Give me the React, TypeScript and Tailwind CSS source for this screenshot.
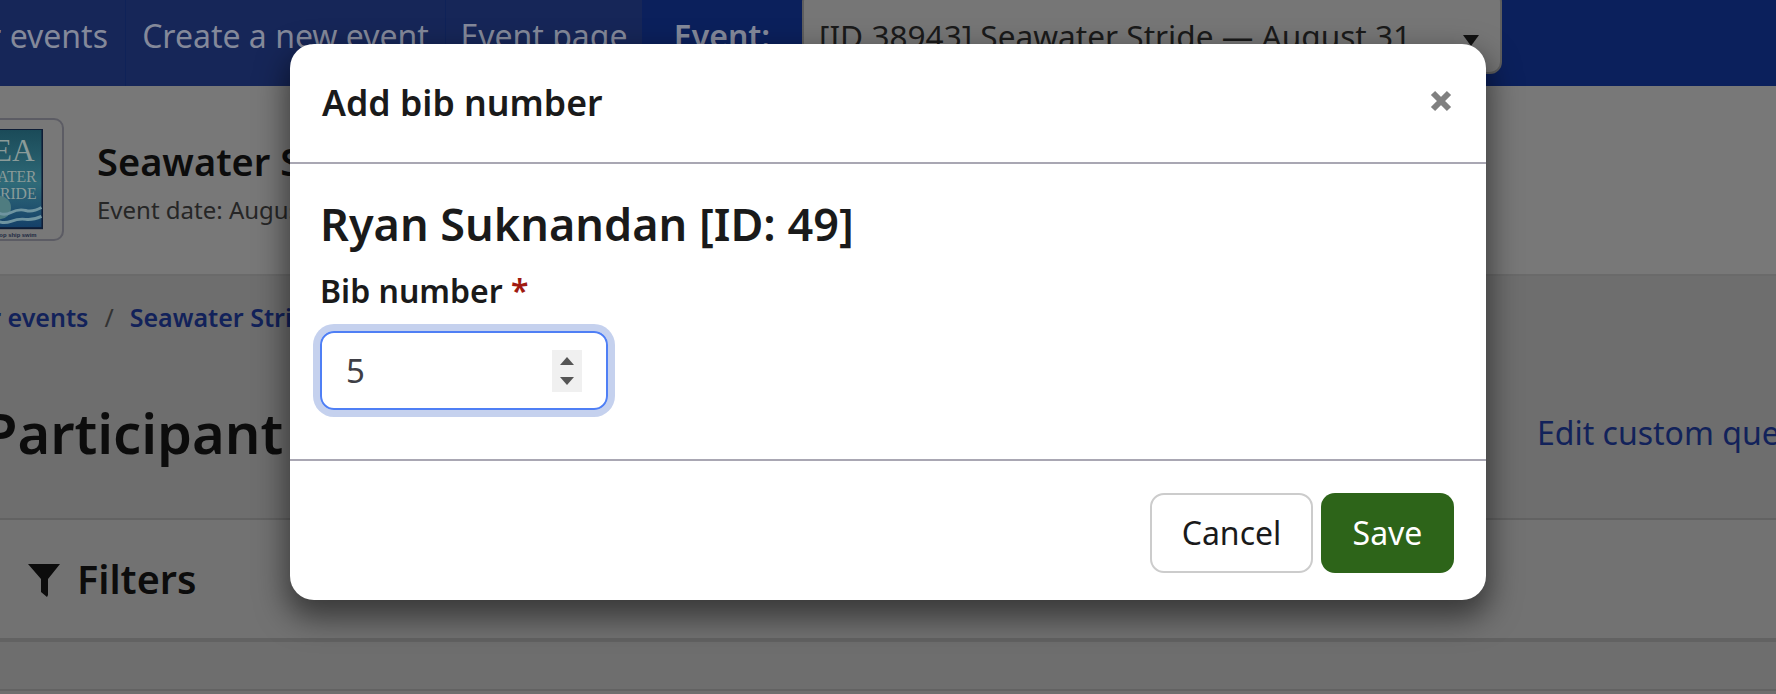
export default function App() {
  const font = { fontFamily: '"Noto Sans", "Open Sans", sans-serif' };
  return (
    <div style={font} className="relative h-[694px] w-[1776px] overflow-hidden bg-[#6e6e6e] text-[#0c0c0c]">
      {/* Top navigation */}
      <nav className="flex h-[86px] items-stretch bg-[#0b205c] text-[32px] text-[#84899a]">
        <div className="-ml-[20px] flex w-[146px] items-center justify-end border-r border-r-[#0f2258] bg-[#162658] pb-[14px] pr-[17px] whitespace-nowrap">
          our events
        </div>
        <div className="flex w-[320px] items-center justify-center border-r border-r-[#0f2258] bg-[#162658] pb-[14px] whitespace-nowrap">
          Create a new event
        </div>
        <div className="flex w-[196px] items-center justify-center bg-[#162658] pb-[14px] whitespace-nowrap">
          Event page
        </div>
        <div className="flex w-[160px] items-center justify-center pb-[14px] font-semibold">Event:</div>
        <div className="-mt-[10px] flex h-[84px] w-[700px] items-center justify-between rounded-[12px] border-2 border-[#5e5e5e] bg-[#767676] pl-[15px] pr-[21px] pt-[8px] text-[31.6px] text-[#1a1a1a] whitespace-nowrap">
          <span>[ID 38943] Seawater Stride — August 31</span>
          <span className="mt-[8px] h-0 w-0 border-x-[8px] border-t-[11px] border-x-transparent border-t-[#111]" />
        </div>
      </nav>

      {/* Event header */}
      <header className="flex h-[190px] items-start border-b-2 border-b-[#6a6a6a] bg-[#787878]">
        <div className="-ml-[20px] mt-[32px] flex h-[123px] w-[84px] shrink-0 flex-col items-end rounded-[10px] border-2 border-[#5c5c64] pr-[19px] pt-[9px]">
          <svg width="62" height="112" viewBox="0 0 62 112">
            <defs>
              <linearGradient id="sea" x1="0" y1="0" x2="0" y2="1">
                <stop offset="0" stopColor="#1a4a58" />
                <stop offset="0.55" stopColor="#2f6a78" />
                <stop offset="1" stopColor="#143f68" />
              </linearGradient>
            </defs>
            <rect x="0" y="0" width="62" height="101" fill="url(#sea)" stroke="#0f1d36" strokeWidth="2" />
            <text x="54" y="33" textAnchor="end" fontFamily="Liberation Serif" fontSize="32" fill="#8a9b99">EA</text>
            <text x="56" y="54" textAnchor="end" fontFamily="Liberation Serif" fontSize="16" fill="#8a9b99">ATER</text>
            <text x="56" y="71" textAnchor="end" fontFamily="Liberation Serif" fontSize="16" fill="#8a9b99">RIDE</text>
            <circle cx="18" cy="80" r="12" fill="#4f7c80" />
            <path d="M0 86q8-7 15-2t15 1 15-2 16-3" fill="none" stroke="#6f94a0" strokeWidth="3" />
            <path d="M0 95q8-6 15-2t15 1 15-2 16-3" fill="none" stroke="#6f94a0" strokeWidth="3" />
            <text x="56" y="110" textAnchor="end" fontFamily="Liberation Sans" fontSize="6" fontWeight="bold" fill="#1e2a42">hop ship swim</text>
          </svg>
        </div>
        <div className="ml-[33px] mt-[49px] whitespace-nowrap">
          <div className="text-[38px] leading-[52px] font-semibold">Seawater Stride</div>
          <div className="mt-[6px] text-[24px] leading-[34px] text-[#262626]">Event date: August 31</div>
        </div>
      </header>

      {/* Breadcrumb */}
      <div className="-ml-[55px] flex h-[84px] items-center gap-[16px] whitespace-nowrap text-[25px] font-semibold text-[#12225a]">
        <span>Your events</span>
        <span className="font-normal text-[#333333]">/</span>
        <span>Seawater Stride</span>
      </div>

      {/* Page title */}
      <div className="flex h-[160px] items-start justify-between border-b-2 border-b-[#626262] pt-[37px]">
        <h1 className="-ml-[17px] text-[56px] leading-[70px] font-semibold whitespace-nowrap">Participant list</h1>
        <a className="-mr-[60px] mt-[-50px] w-[299px] self-center whitespace-nowrap text-[32px] leading-[44px] text-[#12225a]">Edit custom questions</a>
      </div>

      {/* Filters */}
      <div className="flex h-[122px] items-center gap-[17px] border-b-4 border-b-[#626262] bg-[#727272] pl-[28px] pt-[2px]">
        <svg width="32" height="33" viewBox="0 0 32 33" fill="#0c0c0c">
          <path d="M0 0h32L20 15v16l-1 2-6-5V15Z" />
        </svg>
        <span className="text-[39.5px] font-semibold">Filters</span>
      </div>
      <div className="h-[49px] border-b-2 border-b-[#626262]" />

      {/* Modal */}
      <div className="absolute left-[290px] top-[44px] flex h-[556px] w-[1196px] flex-col rounded-[24px] bg-white shadow-[0_14px_30px_4px_rgba(0,0,0,0.5)]">
        <div className="relative flex h-[120px] shrink-0 items-start border-b-2 border-b-[#a9a7b3] pl-[32px] pt-[34px]">
          <h2 className="text-[35.7px] leading-[48px] font-semibold text-[#1a1a1a]">Add bib number</h2>
          <svg className="absolute right-[34px] top-[46px]" width="22" height="22" viewBox="0 0 22 22">
            <path d="M3 3l16 16M19 3L3 19" stroke="#808080" strokeWidth="6" strokeLinecap="butt" />
          </svg>
        </div>
        <div className="flex h-[297px] shrink-0 flex-col items-start border-b-2 border-b-[#a9a7b3] px-[30px] pt-[25px]">
          <div className="text-[45px] leading-[70px] font-semibold text-[#1a1a1a] whitespace-nowrap">Ryan Suknandan [ID: 49]</div>
          <label className="mt-[10px] text-[32px] leading-[44px] font-semibold text-[#1a1a1a]">
            Bib number <span className="text-[#a01a10]">*</span>
          </label>
          <div className="mt-[18px] flex h-[79px] w-[288px] items-center rounded-[14px] border-2 border-[#4f7ff5] pl-[24px] pr-[24px] shadow-[0_0_0_7px_#c5d1ee]">
            <input
              type="text"
              readOnly
              value="5"
              className="w-0 grow bg-transparent text-[33px] text-[#3f3f46] outline-none"
            />
            <div className="flex h-[42px] w-[30px] flex-col items-center justify-center gap-[12px] bg-[#f0f0f0]">
              <span className="h-0 w-0 border-x-[7px] border-b-[8px] border-x-transparent border-b-[#555]" />
              <span className="h-0 w-0 border-x-[7px] border-t-[8px] border-x-transparent border-t-[#555]" />
            </div>
          </div>
        </div>
        <div className="flex grow items-start justify-end gap-[8px] pr-[32px] pt-[32px]">
          <button className="flex h-[80px] w-[163px] items-center justify-center rounded-[14px] border-2 border-[#cccccc] bg-white text-[32px] text-[#1a1a1a]">
            Cancel
          </button>
          <button className="flex h-[80px] w-[133px] items-center justify-center rounded-[14px] bg-[#2d6419] text-[32px] text-white">
            Save
          </button>
        </div>
      </div>
    </div>
  );
}
